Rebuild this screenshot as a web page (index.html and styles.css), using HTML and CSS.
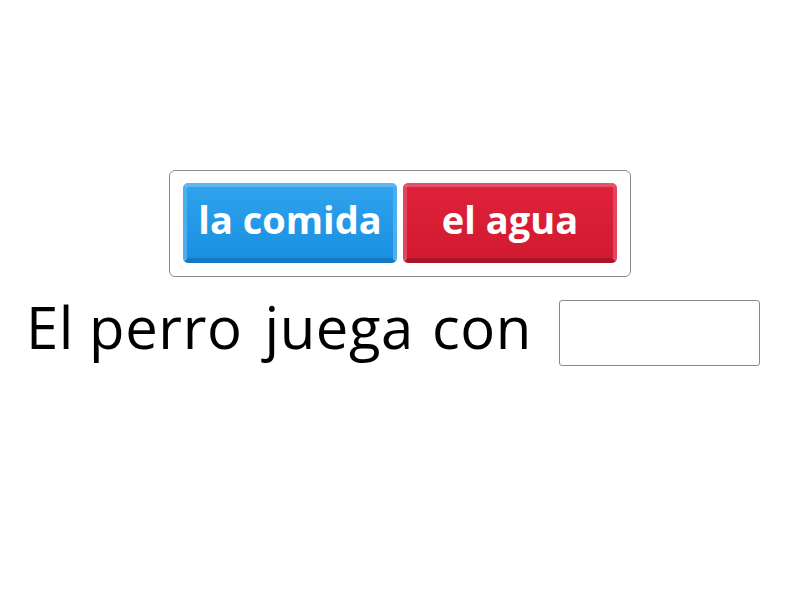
FILE: index.html
```html
<!DOCTYPE html>
<html lang="es">
<head>
<meta charset="utf-8">
<title>El perro juega con</title>
<link rel="stylesheet" href="styles.css">
</head>
<body>
<main class="stage">
  <div class="bank">
    <div class="tile tile-blue">la comida</div>
    <div class="tile tile-red">el agua</div>
  </div>
  <div class="sentence">
    <span class="word w1">El</span>
    <span class="word w2">perro</span>
    <span class="word w3">juega</span>
    <span class="word w4">con</span>
    <span class="slot"></span>
  </div>
</main>
</body>
</html>
```

FILE: styles.css
```css
html, body {
  margin: 0;
  padding: 0;
  background: #ffffff;
}

.stage {
  width: 800px;
  height: 600px;
  font-family: "Open Sans", "Noto Sans", sans-serif;
  padding-top: 170px;
  box-sizing: border-box;
}

.bank {
  width: 462px;
  height: 107px;
  margin: 0 auto;
  box-sizing: border-box;
  border: 1px solid #8c8c8c;
  border-radius: 6px;
  padding: 12px 13px;
  display: flex;
  gap: 6px;
}

.tile {
  width: 214px;
  height: 80px;
  box-sizing: border-box;
  border-radius: 5px;
  border-style: solid;
  border-width: 4px 4px 5px 4px;
  display: flex;
  align-items: center;
  justify-content: center;
  color: #ffffff;
  font-weight: 700;
  font-size: 38px;
  padding-bottom: 7px;
}

.tile-blue {
  background: linear-gradient(#2fa2ec, #1a90e2);
  border-color: #5db6f2 #4cadf0 #1679c4 #4cadf0;
}

.tile-red {
  background: linear-gradient(#de2239, #d21a30);
  border-color: #e5516a #e2465c #a9182a #e2465c;
}

.sentence {
  display: flex;
  align-items: flex-start;
  margin-top: 23px;
  padding-left: 26px;
  font-size: 58px;
  color: #000000;
}

.word {
  line-height: 54px;
  letter-spacing: 0.6px;
}

.w2 { margin-left: 15px; }
.w3 { margin-left: 22px; }
.w4 { margin-left: 18px; }

.slot {
  width: 201px;
  height: 66px;
  box-sizing: border-box;
  border: 1px solid #8a8a8a;
  border-radius: 3px;
  margin-left: 27px;
}
```
